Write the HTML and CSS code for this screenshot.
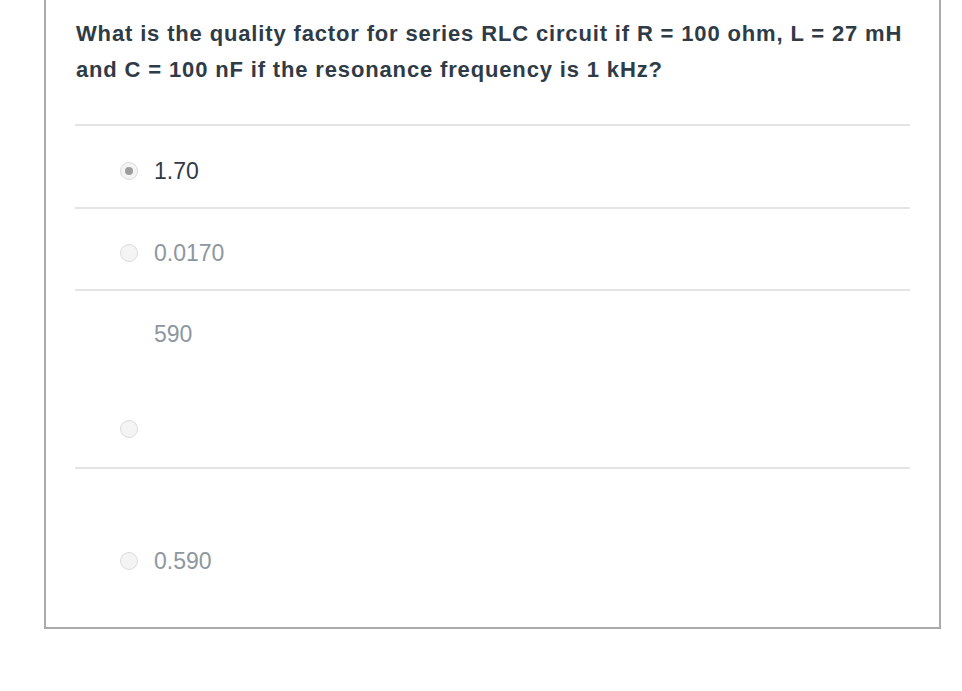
FILE: index.html
```html
<!DOCTYPE html>
<html>
<head>
<meta charset="utf-8">
<link rel="stylesheet" href="styles.css">
</head>
<body>
<div class="card">
  <div class="question">What is the quality factor for series RLC circuit if R = 100 ohm, L = 27 mH and C = 100 nF if the resonance frequency is 1 kHz?</div>
  <ul class="options">
    <li class="option opt-1 selected"><span class="radio checked"></span><span class="label">1.70</span></li>
    <li class="option opt-2"><span class="radio"></span><span class="label">0.0170</span></li>
    <li class="option opt-3 stacked"><span class="label">590</span><span class="radio"></span></li>
    <li class="option opt-4"><span class="radio"></span><span class="label">0.590</span></li>
  </ul>
</div>
</body>
</html>
```
FILE: styles.css
```css
html, body {
  margin: 0;
  padding: 0;
  background: #fff;
}
body {
  font-family: "Liberation Sans", Arial, sans-serif;
}
.card {
  box-sizing: border-box;
  margin-left: 44px;
  width: 897px;
  border: 2px solid #aaaaaa;
  border-top: 0;
  padding: 16px 29px 0 29px;
}
.question {
  font-size: 22px;
  line-height: 36px;
  font-weight: bold;
  letter-spacing: 0.85px;
  color: #2f3b46;
  padding-left: 1px;
  margin-right: -20px;
}
.options {
  list-style: none;
  margin: 36px 0 0 0;
  padding: 0;
}
.option {
  display: flex;
  align-items: center;
  gap: 16px;
  border-top: 2px solid #e4e4e4;
  padding: 32px 0 23px 45px;
  font-size: 23px;
  line-height: 26px;
  color: #8d979f;
}
.option.selected {
  color: #2f3b46;
}
.opt-2 {
  padding-top: 31px;
  padding-bottom: 23px;
}
.opt-3 {
  flex-direction: column;
  align-items: flex-start;
  gap: 73px;
  padding: 30px 0 29px 79px;
}
.opt-3 .radio {
  margin-left: -34px;
}
.opt-4 {
  padding-top: 79px;
  padding-bottom: 53px;
}
.radio {
  box-sizing: border-box;
  width: 18px;
  height: 18px;
  border-radius: 50%;
  border: 1px solid #dcdcdc;
  background: #f4f4f4;
  flex: none;
  display: flex;
  align-items: center;
  justify-content: center;
}
.radio.checked::after {
  content: "";
  width: 8px;
  height: 8px;
  border-radius: 50%;
  background: #9d9d9d;
}
```
